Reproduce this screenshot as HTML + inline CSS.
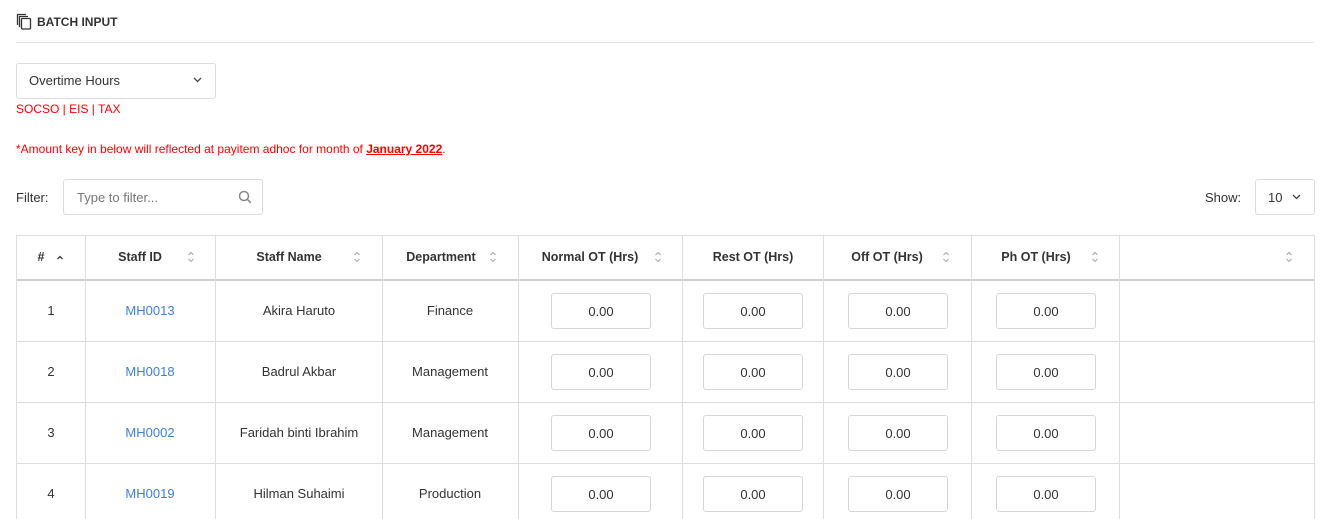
<!DOCTYPE html>
<html><head><meta charset="utf-8"><style>
*{box-sizing:border-box;margin:0;padding:0}
body{width:1328px;height:519px;overflow:hidden;background:#fff;font-family:"Liberation Sans",Arial,sans-serif;font-size:13px;color:#333;position:relative}
.a{position:absolute}
.c{position:absolute;transform:translateX(-50%);white-space:nowrap}
.box{position:absolute;border:1px solid #dcdcdc;border-radius:3px;background:#fff}
.vl{position:absolute;top:235px;height:284px;width:1px;background:#dedede}
.hl{position:absolute;left:16px;width:1298px;height:1px;background:#dedede}
.th{font-weight:bold;font-size:12.5px;color:#333;top:250px}
.sort{position:absolute;top:250px;width:8px;height:14px}
.inp{position:absolute;width:100px;height:36px;border:1px solid #d6d6d6;border-radius:3px;text-align:center;line-height:36px;font-size:13px;color:#333}
.link{color:#3f7fd9}
</style></head><body>
<svg class="a" style="left:16px;top:13px" width="16" height="17" viewBox="0 0 16 17" fill="none" stroke="#333" stroke-width="1.3"><path d="M1.5 12V1.5H10"/><path d="M3.5 14V3.5H12"/><rect x="5.5" y="5.5" width="9" height="10.5" rx="1"/></svg>
<div class="a" style="left:37px;top:15px;font-size:12px;font-weight:bold;color:#333">BATCH INPUT</div>
<div class="a" style="left:16px;top:42px;width:1298px;height:1px;background:#e5e5e5"></div>

<div class="box" style="left:16px;top:63px;width:200px;height:36px"></div>
<div class="a" style="left:29px;top:73px;color:#333">Overtime Hours</div>
<svg class="a" style="left:193px;top:77px" width="9" height="6" viewBox="0 0 9 6"><path d="M1 1l3.5 3.5L8 1" fill="none" stroke="#444" stroke-width="1.3"/></svg>
<div class="a" style="left:16px;top:102px;color:#f00;font-size:12px">SOCSO | EIS | TAX</div>
<div class="a" style="left:16px;top:142px;color:#f00;font-size:12px">*Amount key in below will reflected at payitem adhoc for month of <b style="text-decoration:underline">January 2022</b>.</div>

<div class="a" style="left:16px;top:190px">Filter:</div>
<div class="box" style="left:63px;top:179px;width:200px;height:36px"></div>
<div class="a" style="left:77px;top:190px;color:#777">Type to filter...</div>
<svg class="a" style="left:238px;top:190px" width="14" height="14" viewBox="0 0 14 14" fill="none" stroke="#888" stroke-width="1.5"><circle cx="6" cy="6" r="4.5"/><path d="M9.3 9.3l3.5 3.5"/></svg>
<div class="a" style="left:1205px;top:190px">Show:</div>
<div class="box" style="left:1255px;top:179px;width:60px;height:36px"></div>
<div class="a" style="left:1268px;top:190px">10</div>
<svg class="a" style="left:1292px;top:194px" width="9" height="6" viewBox="0 0 9 6"><path d="M1 1l3.5 3.5L8 1" fill="none" stroke="#444" stroke-width="1.3"/></svg>

<div class="hl" style="top:235px"></div>
<div class="hl" style="top:279px;height:2px;background:#cfcfcf"></div>
<div class="hl" style="top:341px"></div>
<div class="hl" style="top:402px"></div>
<div class="hl" style="top:463px"></div>
<div class="vl" style="left:16px"></div><div class="vl" style="left:85px"></div><div class="vl" style="left:215px"></div><div class="vl" style="left:382px"></div><div class="vl" style="left:518px"></div><div class="vl" style="left:682px"></div><div class="vl" style="left:823px"></div><div class="vl" style="left:971px"></div><div class="vl" style="left:1119px"></div><div class="vl" style="left:1314px"></div>

<div class="c th" style="left:41px">#</div>
<svg class="sort" style="left:56px" viewBox="0 0 8 14"><path d="M1.5 9l2.5-2.5L6.5 9" fill="none" stroke="#333" stroke-width="1.3"/></svg>
<div class="c th" style="left:140px">Staff ID</div>
<div class="c th" style="left:289px">Staff Name</div>
<div class="c th" style="left:441px">Department</div>
<div class="c th" style="left:590px">Normal OT (Hrs)</div>
<div class="c th" style="left:753px">Rest OT (Hrs)</div>
<div class="c th" style="left:887px">Off OT (Hrs)</div>
<div class="c th" style="left:1036px">Ph OT (Hrs)</div>
<svg width="0" height="0" style="position:absolute"><defs><g id="s"><path d="M1.5 5L4 2.5 6.5 5M1.5 9l2.5 2.5L6.5 9" fill="none" stroke="#aaa" stroke-width="1.1"/></g></defs></svg>
<svg class="sort" style="left:187px" viewBox="0 0 8 14"><use href="#s"/></svg>
<svg class="sort" style="left:353px" viewBox="0 0 8 14"><use href="#s"/></svg>
<svg class="sort" style="left:489px" viewBox="0 0 8 14"><use href="#s"/></svg>
<svg class="sort" style="left:654px" viewBox="0 0 8 14"><use href="#s"/></svg>
<svg class="sort" style="left:942px" viewBox="0 0 8 14"><use href="#s"/></svg>
<svg class="sort" style="left:1091px" viewBox="0 0 8 14"><use href="#s"/></svg>
<svg class="sort" style="left:1285px" viewBox="0 0 8 14"><use href="#s"/></svg>

<!-- rows -->
<div class="c" style="left:51px;top:303px">1</div><div class="c link" style="left:150px;top:303px">MH0013</div><div class="c" style="left:299px;top:303px">Akira Haruto</div><div class="c" style="left:450px;top:303px">Finance</div>
<div class="c" style="left:51px;top:364px">2</div><div class="c link" style="left:150px;top:364px">MH0018</div><div class="c" style="left:299px;top:364px">Badrul Akbar</div><div class="c" style="left:450px;top:364px">Management</div>
<div class="c" style="left:51px;top:425px">3</div><div class="c link" style="left:150px;top:425px">MH0002</div><div class="c" style="left:299px;top:425px">Faridah binti Ibrahim</div><div class="c" style="left:450px;top:425px">Management</div>
<div class="c" style="left:51px;top:486px">4</div><div class="c link" style="left:150px;top:486px">MH0019</div><div class="c" style="left:299px;top:486px">Hilman Suhaimi</div><div class="c" style="left:450px;top:486px">Production</div>

<div class="inp" style="left:551px;top:293px">0.00</div><div class="inp" style="left:703px;top:293px">0.00</div><div class="inp" style="left:848px;top:293px">0.00</div><div class="inp" style="left:996px;top:293px">0.00</div>
<div class="inp" style="left:551px;top:354px">0.00</div><div class="inp" style="left:703px;top:354px">0.00</div><div class="inp" style="left:848px;top:354px">0.00</div><div class="inp" style="left:996px;top:354px">0.00</div>
<div class="inp" style="left:551px;top:415px">0.00</div><div class="inp" style="left:703px;top:415px">0.00</div><div class="inp" style="left:848px;top:415px">0.00</div><div class="inp" style="left:996px;top:415px">0.00</div>
<div class="inp" style="left:551px;top:476px">0.00</div><div class="inp" style="left:703px;top:476px">0.00</div><div class="inp" style="left:848px;top:476px">0.00</div><div class="inp" style="left:996px;top:476px">0.00</div>
</body></html>
